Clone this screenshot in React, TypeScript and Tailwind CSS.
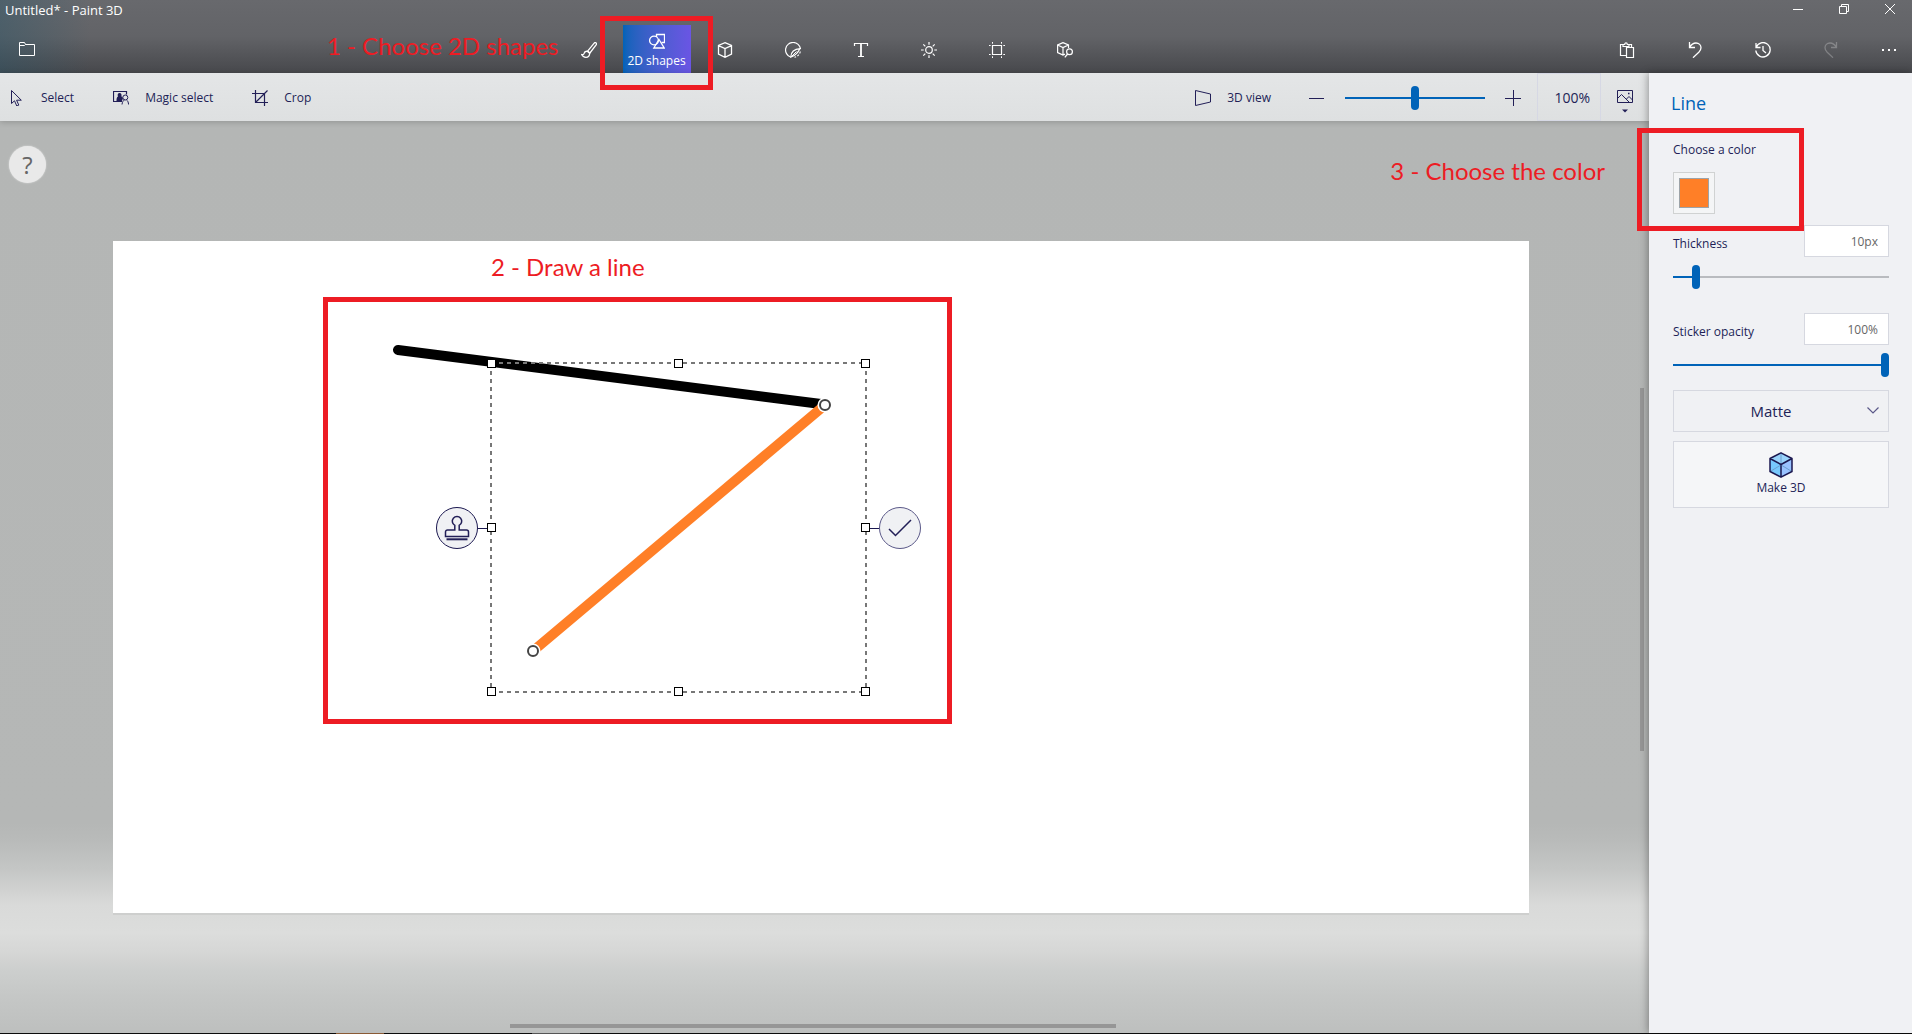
import type { ReactNode } from 'react'

function Icon({ children, size = 16 }: { children: ReactNode; size?: number }) {
  return (
    <svg
      width={size}
      height={size}
      viewBox={`0 0 ${size} ${size}`}
      fill="none"
      stroke="currentColor"
      strokeWidth="1"
      className="shrink-0"
      aria-hidden="true"
    >
      {children}
    </svg>
  )
}

const tools = [
  {
    name: 'Brushes',
    icon: (
      <>
        <path d="M14.9.8c.8.6.7 1.4.2 2.1L8.9 11 6.6 9.1 13 1.3c.6-.7 1.3-.9 1.9-.5z" strokeWidth="1.3" />
        <path d="M6.4 9.3c-1.7-.3-3 .5-3.3 2.1-.2 1-.9 1.5-2.4 1.2.7 1.6 2.2 2.7 4.2 2.7 2.3 0 3.9-1.5 3.7-3.9z" strokeWidth="1.3" />
      </>
    ),
  },
  {
    name: '2D shapes',
    icon: (
      <>
        <circle cx="5" cy="7.5" r="4.4" strokeWidth="1.3" />
        <path d="M7.5 4V1.5h8v8h-3" strokeWidth="1.3" />
        <path d="M10 6.5 15.2 15H4.800z" strokeWidth="1.3" />
      </>
    ),
  },
  {
    name: '3D shapes',
    icon: (
      <path
        d="M8 .7 14.500 3.500v8.700L8 15.300l-6.500-3.100V3.500zM1.500 3.700 8 6.500l6.500-2.800M8 6.500v8.800"
        strokeWidth="1.3"
      />
    ),
  },
  {
    name: 'Stickers',
    icon: (
      <>
        <path d="M15.500 7A7.500 7.500 0 1 0 5.500 15" strokeWidth="1.2" />
        <path d="M5.700 15.200c.3-5 4-8.200 9.500-8.500-1.300 1.400-2 3.200-3.700 5-1.500 1.700-3.500 3-5.800 3.500z" strokeWidth="1.2" />
        <path d="M6 15 11.500 9.500" />
        <path d="M15.300 9.500c-.6 3-2.700 5-5.700 5.800" strokeWidth="1.2" strokeDasharray="2 1.5" />
      </>
    ),
  },
  {
    name: 'Text',
    icon: (
      <>
        <path d="M1.500 4V1.500h13V4M5 14.500h6" strokeWidth="1.2" />
        <path d="M8 1.500v13" strokeWidth="1.8" />
      </>
    ),
  },
  {
    name: 'Effects',
    icon: (
      <>
        <circle cx="8" cy="8" r="3.3" strokeWidth="1.2" />
        <path
          d="M8 0v2.700M8 13.300V16M0 8h2.700M13.300 8H16M2.300 2.300l2 2M11.700 11.700l2 2M2.300 13.700l2-2M11.700 4.300l2-2"
          strokeWidth="1.2"
        />
      </>
    ),
  },
  {
    name: 'Canvas',
    icon: (
      <>
        <path d="M3.500 3.500h9v9h-9z" strokeWidth="1.2" />
        <path d="M3.500 0v1.700M12.500 0v1.700M3.500 14.300V16M12.500 14.300V16M0 3.500h1.700M0 12.500h1.700M14.300 3.500H16M14.300 12.500H16" />
      </>
    ),
  },
  {
    name: '3D library',
    icon: (
      <>
        <path d="M11.500 6V3L6 .6.6 3v7.500L6 13l2-.9M.6 3 6 5.500 11.500 3M6 5.500V13" strokeWidth="1.2" />
        <circle cx="12.5" cy="9.7" r="2.9" strokeWidth="1.2" />
        <path d="m10.600 12-2.800 3.300" strokeWidth="1.3" />
      </>
    ),
  },
]

const actions = [
  {
    name: 'Paste',
    disabled: false,
    icon: (
      <>
        <path d="M7 13.500H1.500v-11H4M10 2.500h2.500V5M4 4.500v-2h1.700c0-1 .5-1.700 1.300-1.700s1.300.7 1.300 1.700H10v2z" strokeWidth="1.2" />
        <path d="M7.500 5.500h7v10h-7z" strokeWidth="1.2" />
      </>
    ),
  },
  {
    name: 'Undo',
    disabled: false,
    icon: <path d="M2.500 0v5.500H8M2.700 5.200C4.300 2.300 6.500 1 9 1c3 0 5 2.200 5 4.800 0 2-1 3.200-2.200 4.400L6 15.700" strokeWidth="1.3" />,
  },
  {
    name: 'History',
    disabled: false,
    icon: (
      <>
        <path d="M1 1v4.500h4.500M1.200 5.300A7.200 7.200 0 1 1 .8 8.500" strokeWidth="1.3" />
        <path d="M8 4v4.500l3 2.500" strokeWidth="1.3" />
      </>
    ),
  },
  {
    name: 'Redo',
    disabled: true,
    icon: <path d="M13.500 0v5.500H8M13.300 5.200C11.700 2.300 9.500 1 7 1 4 1 2 3.200 2 5.800c0 2 1 3.200 2.200 4.400l5.800 5.500" strokeWidth="1.3" />,
  },
]

const selections = [
  {
    name: 'Select',
    icon: <path d="M2.500 .5v13l3-2.700L7.800 16l2-.9-2.200-4.900h4.700z" />,
  },
  {
    name: 'Magic select',
    icon: (
      <>
        <path d="M9 11.500H.5v-10h13v3" strokeWidth="1.2" />
        <path d="M6.500 3a2 2 0 0 1 1.600 3.300c1 .4 1.600 1 1.900 2L9 11H3.500c0-2.500.3-4 1.600-4.700A2 2 0 0 1 6.500 3z" fill="currentColor" stroke="none" />
        <circle cx="12.3" cy="7.5" r="2.5" fill="#e1e3e4" />
        <path d="M9 14.500c.3-2.700 1.300-4 2.500-4.600M13.500 9.900c1.200.8 1.900 2.300 2.100 4.600" />
      </>
    ),
  },
  {
    name: 'Crop',
    icon: <path d="M0 3.500h12.500V16M3.500 0v12.500H16M3.500 12.500 15.500 .5" strokeWidth="1.2" />,
  },
]

const rangeClass =
  'h-6 cursor-pointer appearance-none bg-[length:100%_2px] bg-center bg-no-repeat outline-none [&::-webkit-slider-thumb]:h-6 [&::-webkit-slider-thumb]:w-2 [&::-webkit-slider-thumb]:appearance-none [&::-webkit-slider-thumb]:rounded-full [&::-webkit-slider-thumb]:bg-[#0063b8]'

const noteClass =
  "pointer-events-none absolute z-20 font-['Lato',sans-serif] text-[24px] leading-8 whitespace-nowrap text-[#ed1c24]"

function Header() {
  return (
    <header className="bg-[linear-gradient(90deg,rgba(40,85,105,0.4),transparent_90px),linear-gradient(180deg,#68696d_0%,#626367_50%,#47484c_100%)] text-white">
      <div className="flex h-[25px] items-start justify-between">
        <h1 className="pl-[5px] text-[13px] leading-5">Untitled* - Paint 3D</h1>
        <div className="flex">
          <button aria-label="Minimize" className="flex h-[18px] w-[46px] items-center justify-center">
            <Icon size={10}>
              <path d="M0 5.500h10" />
            </Icon>
          </button>
          <button aria-label="Restore" className="flex h-[18px] w-[46px] items-center justify-center">
            <Icon size={10}>
              <path d="M.5 2.500h7v7h-7zM2.500 2.500v-2h7v7h-2" />
            </Icon>
          </button>
          <button aria-label="Close" className="flex h-[18px] w-[45px] items-center justify-center">
            <Icon size={10}>
              <path d="m0 0 10 10M10 0 0 10" />
            </Icon>
          </button>
        </div>
      </div>
      <div className="flex h-12 justify-between">
        <button aria-label="Menu" className="flex w-[60px] items-center pl-[19px]">
          <Icon>
            <path d="M.5 1.500h5l1 2h9v11H.5zM.5 4.500h5l1-1" />
          </Icon>
        </button>
        <nav className="flex">
          {tools.map((tool) =>
            tool.name === '2D shapes' ? (
              <div key={tool.name} className="relative">
                <button className="flex h-12 w-[68px] flex-col items-center gap-0.5 bg-linear-to-r from-[#0063b9] to-[#6a55e4] pt-2 text-xs leading-5">
                  <Icon>{tool.icon}</Icon>
                  {tool.name}
                </button>
                <div className="pointer-events-none absolute -top-[9px] -left-[23px] z-20 h-[74px] w-[113px] border-5 border-[#ed1c24]" />
                <p className={`${noteClass} top-[5px] right-[132px]`}>1 - Choose 2D shapes</p>
              </div>
            ) : (
              <button key={tool.name} aria-label={tool.name} className="flex w-[68px] items-center justify-center pt-0.5">
                <Icon>{tool.icon}</Icon>
              </button>
            ),
          )}
        </nav>
        <div className="flex">
          {actions.map((action) => (
            <button
              key={action.name}
              aria-label={action.name}
              disabled={action.disabled}
              className="flex w-[68px] items-center justify-center pt-0.5 disabled:opacity-25"
            >
              <Icon>{action.icon}</Icon>
            </button>
          ))}
          <button aria-label="More" className="flex w-[47px] items-center justify-center pt-0.5">
            <Icon>
              <path d="M1 8h2M7 8h2M13 8h2" strokeWidth="2" />
            </Icon>
          </button>
        </div>
      </div>
    </header>
  )
}

function Ribbon() {
  return (
    <div className="relative z-10 flex h-12 justify-between bg-linear-to-b from-[#e4e6e7] to-[#dee0e1] text-xs shadow-[0_1px_6px_rgba(0,0,0,0.2)]">
      <div className="flex items-center gap-[39px] pt-0.5 pl-[9px]">
        {selections.map((item) => (
          <button key={item.name} className="flex items-center gap-4">
            <Icon>{item.icon}</Icon>
            {item.name}
          </button>
        ))}
      </div>
      <div className="flex items-center">
        <button className="mr-[38px] flex items-center gap-4 pt-0.5">
          <Icon>
            <path d="M.5 .5v15l15-3.500V4z" />
          </Icon>
          3D view
        </button>
        <button aria-label="Zoom out" className="pt-0.5">
          <Icon>
            <path d="M0 8.500h15" />
          </Icon>
        </button>
        <div className="mx-5 flex pt-0.5">
          <input
            type="range"
            aria-label="Zoom"
            defaultValue={50}
            className={`${rangeClass} w-[140px] bg-linear-to-r from-[#0063b8] to-[#0063b8]`}
          />
        </div>
        <button aria-label="Zoom in" className="mr-4 pt-0.5">
          <Icon>
            <path d="M0 8.500h16M8.500 0v16" />
          </Icon>
        </button>
        <output className="flex h-12 w-16 items-center justify-end border border-[#d6d8e4] pt-0.5 pr-2.5 text-sm">
          100%
        </output>
        <button aria-label="View options" className="flex w-12 flex-col items-center gap-1.5 pt-2">
          <svg width="16" height="13" viewBox="0 0 16 13" fill="none" stroke="currentColor" aria-hidden="true">
            <path d="M.5 .5h15v12H.5z" />
            <path d="m.5 8.500 4-4 8 8M9.500 9l2.500-2.500 3.500 3.500" />
            <path d="M11 3.500h1.500" strokeWidth="1.5" />
          </svg>
          <svg width="6" height="4" viewBox="0 0 6 4" aria-hidden="true">
            <path d="M0 .5h6L3 3.500z" fill="currentColor" />
          </svg>
        </button>
      </div>
    </div>
  )
}

const handles = [
  [374, 118],
  [561, 118],
  [748, 118],
  [374, 282],
  [748, 282],
  [374, 446],
  [561, 446],
  [748, 446],
]

function Drawing() {
  return (
    <svg
      width="860"
      height="500"
      viewBox="0 -4 860 500"
      className="absolute top-0 left-0"
      fill="none"
      role="img"
      aria-label="Two drawn lines"
    >
      <path d="M285 105 708 159" stroke="#000" strokeWidth="10" strokeLinecap="round" />
      <path d="M712 160 420 406" stroke="#ff7f27" strokeWidth="10" />
    </svg>
  )
}

function Selection() {
  return (
    <svg width="860" height="500" className="absolute top-0 left-0" fill="none" aria-hidden="true">
      <path d="M378 122H753M378 451H753" stroke="#777" strokeWidth="2" strokeDasharray="4 4" />
      <path d="M378 122V450M753 122V450" stroke="#777" strokeWidth="2" strokeDasharray="4 4" />
      <path d="M365 287.500h9M757 287.500h10" stroke="#1b1850" />
      {handles.map(([x, y]) => (
        <rect key={`${x}-${y}`} x={x + 0.5} y={y + 0.5} width="8" height="8" fill="#fff" stroke="#000" />
      ))}
      {[
        [712, 164],
        [420, 410],
      ].map(([x, y]) => (
        <g key={x}>
          <circle cx={x} cy={y} r="7.5" fill="#fff" />
          <circle cx={x} cy={y} r="5" stroke="#444" strokeWidth="2" />
        </g>
      ))}
    </svg>
  )
}

function Stage() {
  return (
    <main className="relative flex flex-1 bg-[linear-gradient(180deg,#b4b6b5_0%,#b5b7b6_77%,#b9bbba_79%,#c4c6c5_82%,#cfd0cf_84%,#d9dad9_86%,#dcdddc_89%,#d6d7d6_91%,#cdcfce_93%,#c5c7c6_96%,#bdbfbe_100%)] pt-[120px] pr-[120px] pb-[120px] pl-[113px]">
      <button
        aria-label="Help"
        className="absolute top-[25px] left-[9px] size-[37px] rounded-full bg-[#e9e9e9] text-2xl leading-9 text-[#666] shadow-[0_0_2px_rgba(255,255,255,0.6)]"
      >
        ?
      </button>
      <div className="relative flex-1 bg-white shadow-[0_2px_0_rgba(0,0,0,0.05)]">
        <Drawing />
        <Selection />
        <button
          aria-label="Stamp"
          className="absolute top-[266px] left-[323px] flex size-[42px] items-center justify-center rounded-full border border-[#1b1850] bg-[#f0f1f4]"
        >
          <svg width="26" height="26" viewBox="0 0 26 26" fill="none" stroke="currentColor" strokeWidth="1.5" aria-hidden="true">
            <path d="M10.800 15V10.300a4.700 4.700 0 1 1 4.400 0V15h7.300a2 2 0 0 1 2 2v4.500h-23V17a2 2 0 0 1 2-2z" />
            <path d="M2.500 24.300h21" strokeWidth="2" />
          </svg>
        </button>
        <button
          aria-label="Done"
          className="absolute top-[266px] left-[766px] flex size-[42px] items-center justify-center rounded-full border border-[#5b5989] bg-[#f0f1f4]"
        >
          <svg width="24" height="18" viewBox="0 0 24 18" fill="none" stroke="currentColor" strokeWidth="1.5" aria-hidden="true">
            <path d="m1 10 6.500 6.500L23 1" />
          </svg>
        </button>
        <p className={`${noteClass} top-[10px] left-[378px]`}>2 - Draw a line</p>
        <div className="pointer-events-none absolute top-14 left-[210px] h-[427px] w-[629px] border-5 border-[#ed1c24]" />
      </div>
      <div className="absolute top-[267px] right-[5px] h-[363px] w-1 bg-[#969696]" />
      <div className="absolute bottom-[5px] left-[510px] h-1 w-[606px] bg-[#969696]" />
    </main>
  )
}

function Field({ id, label, value }: { id: string; label: string; value: string }) {
  return (
    <div className="flex justify-between">
      <label htmlFor={id} className="pt-[9px] text-xs leading-5">
        {label}
      </label>
      <input
        id={id}
        defaultValue={value}
        className="h-8 w-[85px] border border-[#d6d8e0] bg-white pr-2.5 text-right text-xs text-[#666] outline-none"
      />
    </div>
  )
}

function Panel() {
  return (
    <aside className="relative z-10 w-[263px] shrink-0 bg-[#f0f1f4] pr-[23px] pl-6 shadow-[-1px_0_8px_rgba(0,0,0,0.35)]">
      <h2 className="-ml-0.5 pt-4 text-lg leading-7 text-[#0063b8]">Line</h2>
      <section className="relative mt-[23px]">
        <p className="text-xs leading-5">Choose a color</p>
        <button
          aria-label="Current color"
          className="mt-3 flex size-[42px] items-center justify-center border border-[#d0d2d2] bg-[#f4f5f6]"
        >
          <span className="size-[30px] border border-[#9da3a8] bg-[#ff7f27]" />
        </button>
        <div className="pointer-events-none absolute -top-3 -left-9 z-20 h-[103px] w-[167px] border-5 border-[#ed1c24]" />
        <p className={`${noteClass} top-[15px] right-[284px]`}>3 - Choose the color</p>
      </section>
      <div className="mt-[11px] flex flex-col gap-2">
        <Field id="thickness" label="Thickness" value="10px" />
        <input
          type="range"
          aria-label="Thickness"
          defaultValue={9}
          className={`${rangeClass} w-full bg-[linear-gradient(90deg,#0063b8_11%,#b9bbbf_11%)]`}
        />
      </div>
      <div className="mt-6 flex flex-col gap-2">
        <Field id="opacity" label="Sticker opacity" value="100%" />
        <input
          type="range"
          aria-label="Sticker opacity"
          defaultValue={100}
          className={`${rangeClass} w-full bg-linear-to-r from-[#0063b8] to-[#0063b8]`}
        />
      </div>
      <div className="relative mt-[13px]">
        <select
          aria-label="Material"
          className="h-[42px] w-full appearance-none border border-[#d6d8e0] bg-transparent pr-5 text-[15px] [text-align-last:center]"
        >
          <option>Matte</option>
        </select>
        <svg
          width="12"
          height="7"
          viewBox="0 0 12 7"
          fill="none"
          stroke="#5b5989"
          strokeWidth="1.2"
          className="pointer-events-none absolute top-[17px] right-2.5"
          aria-hidden="true"
        >
          <path d="m.5 .5 5.500 5.500L11.500 .5" />
        </svg>
      </div>
      <button className="mt-[9px] flex h-[67px] w-full flex-col items-center border border-[#d6d8e0] bg-[#f5f6f8] pt-2.5 text-xs leading-5">
        <svg width="24" height="26" viewBox="0 0 24 26" strokeLinejoin="round" strokeWidth="1.5" aria-hidden="true">
          <path d="M12 .8 23 6.500 12 12.500 1 6.500z" fill="#99d3fb" />
          <path d="M1 6.500 12 12.500v12.700L1 19.500z" fill="#77c8fd" />
          <path d="M23 6.500 12 12.500v12.700l11-5.700z" fill="#99c2ff" />
          <path d="M12 1.500v10M2 19l9-5.500M22 19l-9-5.500" fill="none" stroke="#6b9fd0" strokeWidth="1" />
          <path
            d="M12 .8 23 6.500v13L12 25.200 1 19.500v-13zM1 6.500l11 6 11-6M12 12.500v12.700"
            fill="none"
            stroke="#1b1850"
          />
        </svg>
        Make 3D
      </button>
    </aside>
  )
}

export default function App() {
  return (
    <div className="flex min-h-screen flex-col overflow-hidden font-['Open_Sans','Noto_Sans',sans-serif] text-[#221f57]">
      <Header />
      <div className="flex flex-1">
        <div className="flex min-w-0 flex-1 flex-col">
          <Ribbon />
          <Stage />
        </div>
        <Panel />
      </div>
      <footer className="h-px bg-[linear-gradient(90deg,#0b0b0b_336px,#8a5a35_336px,#8a5a35_384px,#0b0b0b_384px,#0b0b0b_532px,#555_532px,#555_580px,#0b0b0b_580px)]" />
    </div>
  )
}
